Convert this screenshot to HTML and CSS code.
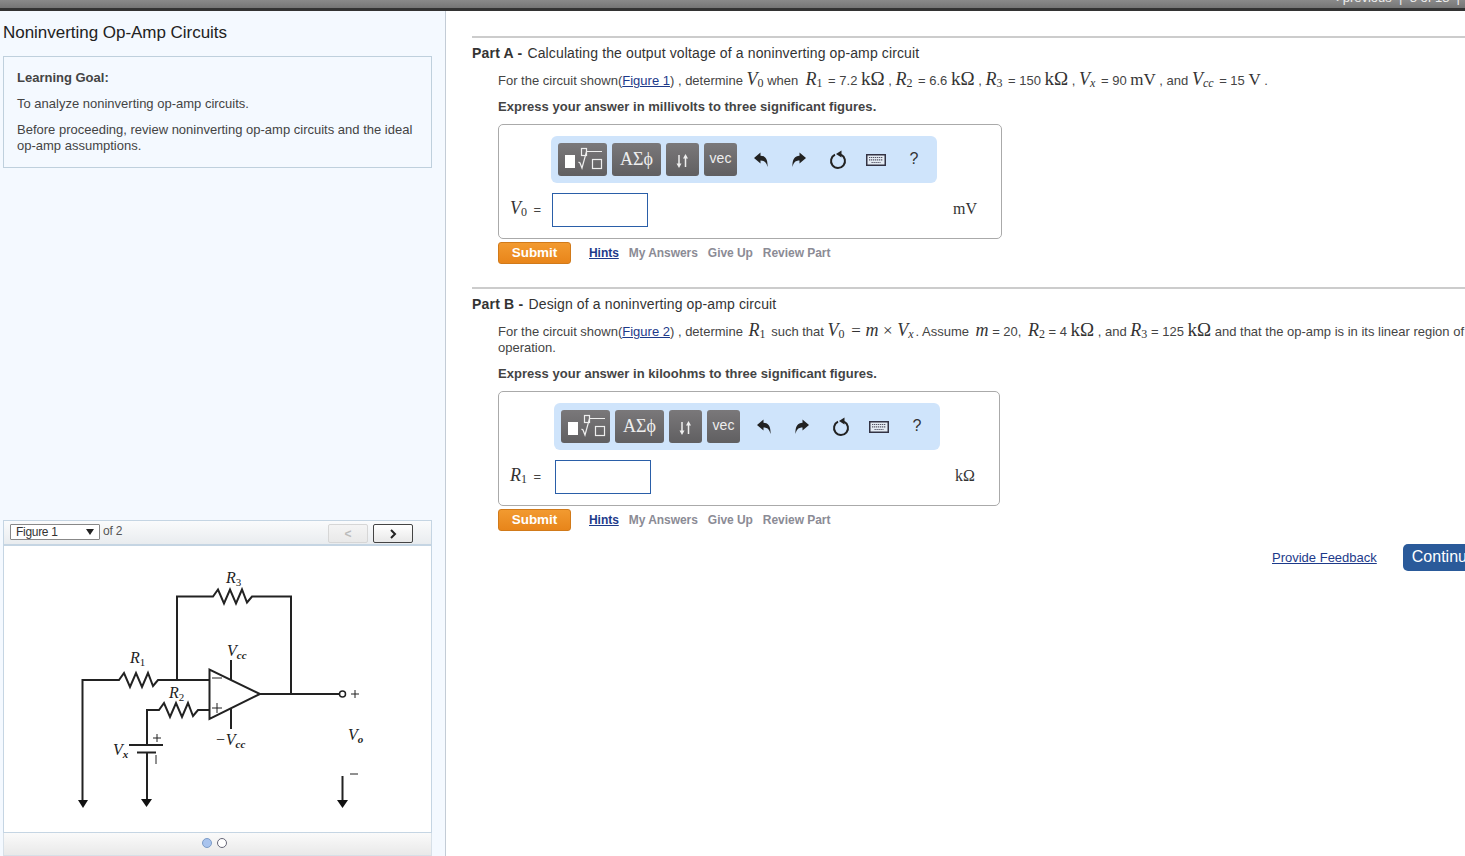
FILE: index.html
```html
<!DOCTYPE html>
<html lang="en">
<head>
<meta charset="utf-8">
<title>Noninverting Op-Amp Circuits</title>
<link rel="stylesheet" href="styles.css">
</head>
<body>
<header class="topbar"><span class="pager">‹ previous &nbsp;|&nbsp; 8 of 18 &nbsp;|</span></header>
<div class="layout">
  <aside class="side">
    <h1 class="title">Noninverting Op-Amp Circuits</h1>
    <section class="goal">
      <h2 class="goal-head">Learning Goal:</h2>
      <p class="goal-p">To analyze noninverting op-amp circuits.</p>
      <p class="goal-p">Before proceeding, review noninverting op-amp circuits and the ideal op-amp assumptions.</p>
    </section>
    <section class="figure">
      <div class="fig-bar">
        <span class="fig-select">Figure 1<span class="caret"></span></span>
        <span class="fig-of">of 2</span>
        <span class="nav nav-off">&lt;</span>
        <span class="nav">
          <svg class="chev" viewBox="0 0 8 10" width="8" height="10"><path d="M2 1l4 4-4 4" fill="none" stroke="#222" stroke-width="2"/></svg>
        </span>
      </div>
      <div class="fig-body">
        <svg class="circuit" viewBox="4 546 427 286" width="427" height="286">
          <g fill="none" stroke="#222" stroke-width="2">
            <path d="M177 680V596.500H213l5 -7 6 14 6 -14 6 14 6 -14 5 13 5 -6H291V694"/>
            <path d="M82.500 800V680H119l5 -7 6 14 6 -14 6 14 6 -14 5 13 5 -6H209"/>
            <path d="M147 744V710H159l5 -7 6 14 6 -14 6 14 6 -14 5 13 5 -6H209"/>
            <path d="M147 752V800M342.500 776V800"/>
            <path d="M129 745H163M137 752.500H156"/>
            <path d="M209.500 669.500V719L260 694Z"/>
            <path d="M231 660V680M231 709V729"/>
            <path d="M260 694H339"/>
          </g>
          <g fill="none" stroke="#222" stroke-width="1.500">
            <circle cx="342.500" cy="694" r="3"/>
            <path d="M212 678H222M212 708H222M217 703V713" stroke-width="1"/>
            <path d="M351 694H359M355 690V698M153 738H161M157 734V742M156 755V764M350 774H358" stroke-width="1"/>
          </g>
          <path class="tip" d="M78 800H88L83 808ZM141 799H152L146.500 807ZM337 800H348L342.500 808Z"/>
          <text class="lbl" x="226" y="583">R<tspan class="sb" dy="3">3</tspan></text>
          <text class="lbl" x="130" y="663">R<tspan class="sb" dy="3">1</tspan></text>
          <text class="lbl" x="169" y="698">R<tspan class="sb" dy="3">2</tspan></text>
          <text class="lbl" x="227" y="656">V<tspan class="sbi" dy="3">cc</tspan></text>
          <text class="lbl" x="215" y="745">−V<tspan class="sbi" dy="3">cc</tspan></text>
          <text class="lbl" x="113" y="755">V<tspan class="sbi" dy="3">x</tspan></text>
          <text class="lbl" x="348" y="740">V<tspan class="sbi" dy="3">o</tspan></text>
        </svg>
      </div>
      <div class="fig-foot"><span class="dot dot-on"></span><span class="dot"></span></div>
    </section>
  </aside>

  <main class="main">
    <section class="part">
      <h2 class="part-head"><b>Part A - </b>Calculating the output voltage of a noninverting op-amp circuit</h2>
      <div class="part-body">
        <p class="q">For the circuit shown(<a href="#">Figure 1</a>) , determine <i class="m">V</i><sub class="s">0</sub> when &nbsp;<i class="m">R</i><sub class="s sg">1</sub> = 7.2 <span class="ko">kΩ</span> , <i class="m">R</i><sub class="s sg">2</sub> = 6.6 <span class="ko">kΩ</span> , <i class="m">R</i><sub class="s sg">3</sub> = 150 <span class="ko">kΩ</span> , <i class="m">V</i><sub class="si sg">x</sub> = 90 <span class="u">mV</span> , and <i class="m">V</i><sub class="si sg">cc</sub> = 15 <span class="u">V</span> .</p>
        <p class="ask">Express your answer in millivolts to three significant figures.</p>
        <div class="answer">
          <div class="toolbar">
            <span class="tb tb-tpl"><svg viewBox="0 0 49 33" width="49" height="33"><rect x="7" y="12" width="10" height="13" fill="#fff"/><g fill="none" stroke="#eee" stroke-width="1.200"><rect x="23.500" y="5.500" width="5" height="7"/><path d="M20.500 19l1.500 1 2 5 4.500-16.500H44"/><rect x="34.500" y="16.500" width="9" height="9"/></g></svg></span>
            <span class="tb tb-greek">ΑΣϕ</span>
            <span class="tb"><svg class="arrows" viewBox="0 0 33 33" width="33" height="33"><path d="M13 12V22M19.500 24V14" stroke="#eee" stroke-width="1.500"/><path d="M10.500 20.500H15.500L13 25ZM17 15.500H22L19.500 11Z" fill="#eee"/></svg></span>
            <span class="tb tb-vec">vec</span>
            <span class="ic"><svg viewBox="0 0 14 15" width="14" height="15"><path d="M0 6L6.500.5V3.700C11 3.700 14 7 13.500 15 12.500 10.500 10.500 8.500 6.500 8.500V11.500Z"/></svg></span>
            <span class="ic"><svg viewBox="0 0 14 15" width="14" height="15"><path d="M14 6L7.500.5V3.700C3 3.700 0 7 .5 15 1.500 10.500 3.500 8.500 7.500 8.500V11.500Z"/></svg></span>
            <span class="ic ic-r"><svg viewBox="0 0 20 20" width="20" height="20"><path d="M7 4.700A7 7 0 1 0 13 4.700" fill="none" stroke="#222" stroke-width="2"/><path d="M8 4L13.500.5 13.500 7.500Z"/></svg></span>
            <span class="ic"><svg viewBox="0 0 20 12" width="20" height="12"><rect x=".75" y=".75" width="18.500" height="10.500" fill="#e4ebf3" stroke="#334" stroke-width="1.500"/><path d="M3 3.500H17M3 5.800H17M5.500 8.500H14.500" stroke="#556" stroke-width="1.200" stroke-dasharray="1.300 .7"/></svg></span>
            <span class="ic ic-q">?</span>
          </div>
          <div class="ans-row">
            <label class="ans-label"><i class="m">V</i><sub class="s">0</sub> =</label>
            <span class="ans-input"></span>
            <span class="ans-unit">mV</span>
          </div>
        </div>
        <div class="actions">
          <span class="submit">Submit</span>
          <a class="act-link" href="#">Hints</a>
          <span class="act">My Answers</span>
          <span class="act">Give Up</span>
          <span class="act">Review Part</span>
        </div>
      </div>
    </section>

    <section class="part part-b">
      <h2 class="part-head"><b>Part B - </b>Design of a noninverting op-amp circuit</h2>
      <div class="part-body">
        <p class="q q-b">For the circuit shown(<a href="#">Figure 2</a>) , determine <i class="m lead">R</i><sub class="s sg">1</sub> such that <i class="m">V</i><sub class="s sg">0</sub> <span class="u op">=</span> <i class="m">m</i> <span class="u op">×</span> <i class="m">V</i><sub class="si sg">x</sub>. Assume&ensp;<i class="m">m</i> = 20,&ensp;<i class="m">R</i><sub class="s">2</sub> = 4 <span class="ko">kΩ</span> , and <i class="m">R</i><sub class="s">3</sub> = 125 <span class="ko">kΩ</span> and that the op-amp is in its linear region of<br>operation.</p>
        <p class="ask">Express your answer in kiloohms to three significant figures.</p>
        <div class="answer answer-b">
          <div class="toolbar">
            <span class="tb tb-tpl"><svg viewBox="0 0 49 33" width="49" height="33"><rect x="7" y="12" width="10" height="13" fill="#fff"/><g fill="none" stroke="#eee" stroke-width="1.200"><rect x="23.500" y="5.500" width="5" height="7"/><path d="M20.500 19l1.500 1 2 5 4.500-16.500H44"/><rect x="34.500" y="16.500" width="9" height="9"/></g></svg></span>
            <span class="tb tb-greek">ΑΣϕ</span>
            <span class="tb"><svg class="arrows" viewBox="0 0 33 33" width="33" height="33"><path d="M13 12V22M19.500 24V14" stroke="#eee" stroke-width="1.500"/><path d="M10.500 20.500H15.500L13 25ZM17 15.500H22L19.500 11Z" fill="#eee"/></svg></span>
            <span class="tb tb-vec">vec</span>
            <span class="ic"><svg viewBox="0 0 14 15" width="14" height="15"><path d="M0 6L6.500.5V3.700C11 3.700 14 7 13.500 15 12.500 10.500 10.500 8.500 6.500 8.500V11.500Z"/></svg></span>
            <span class="ic"><svg viewBox="0 0 14 15" width="14" height="15"><path d="M14 6L7.500.5V3.700C3 3.700 0 7 .5 15 1.500 10.500 3.500 8.500 7.500 8.500V11.500Z"/></svg></span>
            <span class="ic ic-r"><svg viewBox="0 0 20 20" width="20" height="20"><path d="M7 4.700A7 7 0 1 0 13 4.700" fill="none" stroke="#222" stroke-width="2"/><path d="M8 4L13.500.5 13.500 7.500Z"/></svg></span>
            <span class="ic"><svg viewBox="0 0 20 12" width="20" height="12"><rect x=".75" y=".75" width="18.500" height="10.500" fill="#e4ebf3" stroke="#334" stroke-width="1.500"/><path d="M3 3.500H17M3 5.800H17M5.500 8.500H14.500" stroke="#556" stroke-width="1.200" stroke-dasharray="1.300 .7"/></svg></span>
            <span class="ic ic-q">?</span>
          </div>
          <div class="ans-row">
            <label class="ans-label"><i class="m">R</i><sub class="s">1</sub> =</label>
            <span class="ans-input"></span>
            <span class="ans-unit">kΩ</span>
          </div>
        </div>
        <div class="actions">
          <span class="submit">Submit</span>
          <a class="act-link" href="#">Hints</a>
          <span class="act">My Answers</span>
          <span class="act">Give Up</span>
          <span class="act">Review Part</span>
        </div>
      </div>
    </section>

    <div class="foot">
      <a class="feedback" href="#">Provide Feedback</a>
      <span class="continue">Continue</span>
    </div>
  </main>
</div>
</body>
</html>
```
FILE: styles.css
```css
* { box-sizing: border-box; }
html, body { margin: 0; height: 856px; overflow: hidden; }
body {
  display: flex;
  flex-direction: column;
  font-family: "Liberation Sans", Arial, sans-serif;
  font-size: 13px;
  color: #444;
  background: #fff;
}
.topbar {
  flex: 0 0 11px;
  display: flex;
  justify-content: flex-end;
  align-items: flex-end;
  overflow: hidden;
  background: linear-gradient(#8a8a8a, #757575);
  border-bottom: 3px solid #333;
  color: #eee;
  font-size: 13px;
  line-height: 14px;
  white-space: nowrap;
  padding-right: 5px;
}
.pager { margin-bottom: 3px; }
.layout { flex: 1; display: flex; min-height: 0; }

.side {
  flex: 0 0 446px;
  display: flex;
  flex-direction: column;
  background: #f4f9ff;
  border-right: 1px solid #c3ccd6;
  padding: 0 13px 0 3px;
}
.title { margin: 12px 0 13px; font-size: 17px; line-height: 20px; font-weight: 400; letter-spacing: -.03px; color: #222; }
.goal { border: 1px solid #bfd0dd; padding: 13px 13px 14px; height: 112px; }
.goal-head { margin: 0 0 10px; font-size: 13px; line-height: 16px; font-weight: 700; color: #444; }
.goal-p { margin: 0 0 10px; line-height: 16px; }

.figure { margin-top: auto; height: 336px; display: flex; flex-direction: column; }
.fig-bar {
  height: 25px;
  display: flex;
  align-items: flex-start;
  padding: 3px 18px 0 6px;
  border: 1px solid #c5d5e3;
  background: linear-gradient(#fafbfc, #e9ecef);
  font-size: 12px;
  color: #333;
}
.fig-select {
  position: relative;
  width: 90px;
  height: 16px;
  padding-left: 5px;
  line-height: 14px;
  letter-spacing: -.3px;
  background: #fff;
  border: 1px solid #888;
  border-radius: 1px;
}
.caret {
  position: absolute;
  right: 5px;
  top: 4px;
  border: 4px solid transparent;
  border-top: 6px solid #222;
  border-bottom: 0;
}
.fig-of { margin-left: 3px; line-height: 15px; letter-spacing: -.2px; color: #555; }
.nav {
  width: 40px;
  height: 19px;
  margin-left: 5px;
  display: flex;
  align-items: center;
  justify-content: center;
  border: 1px solid #444;
  border-radius: 2px;
  background: linear-gradient(#fff, #e8e8e8);
  color: #222;
}
.nav-off { margin-left: auto; border-color: #d6d6d6; color: #bbb; font-weight: 700; background: linear-gradient(#f4f4f4, #e9e9e9); }
.fig-body { height: 288px; border: 1px solid #c5d5e3; background: #fff; }
.circuit { display: block; }
.tip { fill: #111; }
.lbl { font-family: "Liberation Serif", serif; font-style: italic; font-size: 16px; fill: #222; }
.sb { font-size: 11px; font-style: normal; }
.sbi { font-size: 11px; font-weight: 700; }
.fig-foot {
  flex: 1;
  display: flex;
  justify-content: center;
  gap: 5px;
  padding: 5px 6px 0 0;
  border: 1px solid #d7e0e8;
  border-top: 0;
  background: linear-gradient(#fafafa, #e9e9e9);
}
.dot { width: 10px; height: 10px; border: 1px solid #667; border-radius: 50%; background: #fff; }
.dot-on { border-color: #7d9cc7; background: #a9c4ee; }

.main { flex: 1; min-width: 0; padding: 25px 0 0 26px; overflow: hidden; }
.part { border-top: 2px solid #ccc; padding-top: 7px; }
.part-b { margin-top: 23px; }
.part-head { margin: 0; font-size: 14px; line-height: 16px; font-weight: 400; letter-spacing: .13px; color: #333; }
.part-head b { font-weight: 700; letter-spacing: .2px; margin-right: 1px; }
.part-body { padding-left: 26px; }
.q { margin: 12px 0 0; line-height: 16px; font-size: 13px; white-space: nowrap; }
.q a, .act-link, .feedback { color: #1d3a8a; }
.m { font-family: "Liberation Serif", serif; font-size: 18px; line-height: 0; font-style: italic; color: #333; }
.lead { margin-left: 2px; }
.u { font-family: "Liberation Serif", serif; font-size: 17px; line-height: 0; color: #333; }
.op { margin: 0 1px; }
.ko { font-family: "Liberation Serif", serif; font-size: 19px; line-height: 0; color: #333; }
.s, .si { font-family: "Liberation Serif", serif; font-size: 12px; line-height: 0; vertical-align: -2px; color: #333; }
.si { font-style: italic; }
.sg { margin-right: 2px; }
.ask { margin: 10px 0 0; font-weight: 700; line-height: 16px; letter-spacing: .03px; color: #444; }
.answer {
  width: 504px;
  height: 115px;
  margin-top: 9px;
  padding: 11px 0 0 52px;
  border: 1px solid #aaa;
  border-radius: 5px;
}
.answer-b { width: 502px; padding-left: 55px; }
.toolbar {
  width: 386px;
  height: 47px;
  display: flex;
  align-items: flex-start;
  gap: 5px;
  padding: 7px 0 0 7px;
  border-radius: 6px;
  background: #cfe4fb;
}
.tb {
  flex: 0 0 33px;
  height: 33px;
  display: flex;
  align-items: center;
  justify-content: center;
  border-radius: 3px;
  background: linear-gradient(#7a787a, #605f61);
  color: #eee;
}
.tb-tpl { flex-basis: 49px; }
.tb-greek { flex-basis: 49px; font-family: "Liberation Serif", serif; font-size: 18px; }
.tb-vec { font-size: 14px; padding-bottom: 3px; }
.ic { width: 20px; height: 33px; display: flex; align-items: center; justify-content: center; margin-left: 13px; fill: #222; color: #333; }
.tb-vec + .ic { margin-left: 9px; }
.ic-r { margin-left: 14px; }
.ic-q { font-size: 16px; padding-bottom: 2px; }
.ans-row { display: flex; align-items: center; height: 34px; margin: 10px 0 0 -41px; }
.answer-b .ans-row { margin-left: -44px; }
.ans-label { width: 42px; font-size: 13px; word-spacing: 3px; white-space: nowrap; padding-bottom: 1px; }
.answer-b .ans-label { width: 45px; }
.ans-input { width: 96px; height: 34px; border: 1px solid #2a5ea8; background: #fff; }
.ans-unit { margin-left: auto; margin-right: 24px; padding-bottom: 3px; font-family: "Liberation Serif", serif; font-size: 16px; color: #333; }
.actions { display: flex; align-items: center; height: 22px; margin-top: 3px; font-size: 12px; font-weight: 700; letter-spacing: -.05px; color: #8b8b95; }
.submit {
  width: 73px;
  height: 22px;
  margin-right: 18px;
  text-align: center;
  line-height: 20px;
  font-size: 13.500px;
  border-radius: 3px;
  color: #fff;
  background: linear-gradient(#f29a30, #e8851a);
  border: 1px solid #d17a1a;
}
.act { margin-left: 10px; }
.foot { display: flex; align-items: center; height: 27px; margin-top: 13px; white-space: nowrap; }
.feedback { margin-left: 800px; }
.continue {
  flex: none;
  width: 90px;
  height: 27px;
  margin-left: 26px;
  padding-left: 9px;
  line-height: 26px;
  font-size: 16px;
  color: #fff;
  border-radius: 5px;
  background: #2a5a9a;
}
```
